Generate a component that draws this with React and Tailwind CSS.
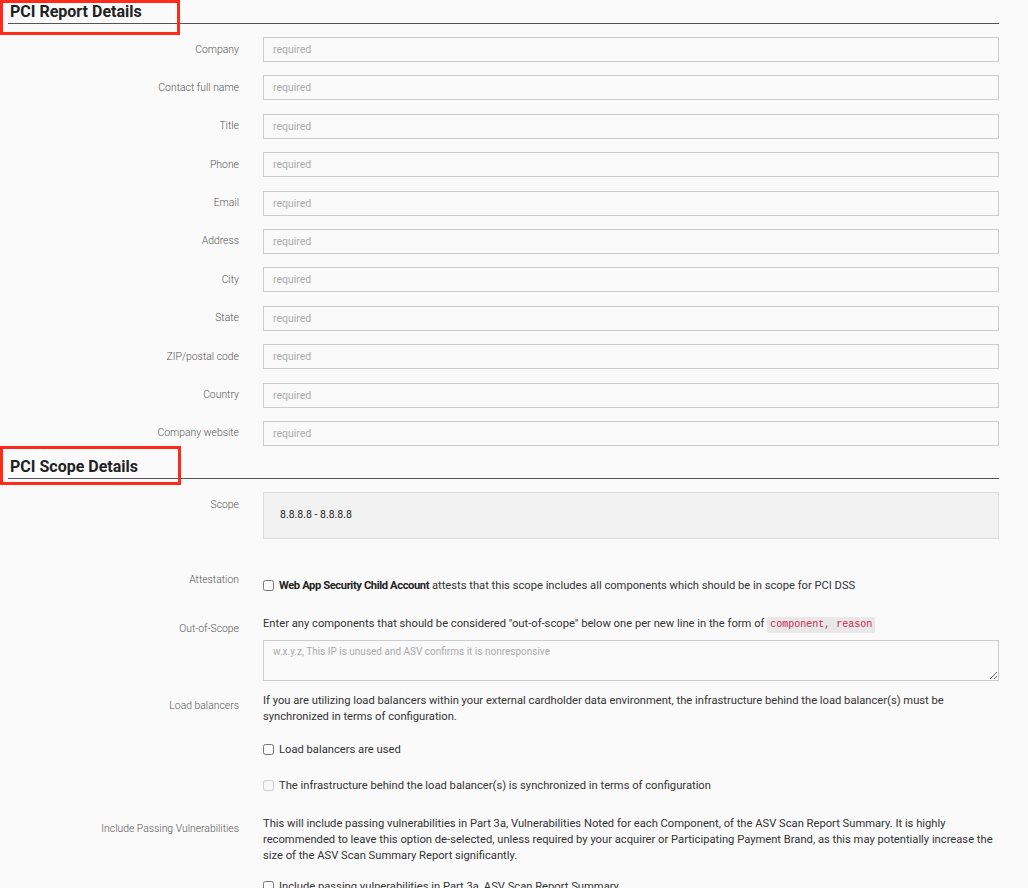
import React from 'react';

const reportFields = [
  'Company',
  'Contact full name',
  'Title',
  'Phone',
  'Email',
  'Address',
  'City',
  'State',
  'ZIP/postal code',
  'Country',
  'Company website',
];

const SectionTitle = ({ children, boxClass }) => (
  <div className="relative">
    <h2 className="pt-[2px] pb-[1px] pl-[2px] border-b border-[#555] text-[16px] leading-[20px] font-bold text-[#222]">
      {children}
    </h2>
    {/* red annotation box */}
    <div className={`absolute left-[-8px] border-[3px] border-[#ff2b1a] pointer-events-none ${boxClass}`}></div>
  </div>
);

const Label = ({ children, className = '' }) => (
  <div className={`w-[231px] shrink-0 text-right text-[10.4px] leading-[16px] font-light text-[#555] ${className}`}>
    {children}
  </div>
);

const Check = ({ disabled }) => (
  <input
    type="checkbox"
    disabled={disabled}
    className="m-0 w-[11px] h-[11px] shrink-0 accent-[#555]"
  />
);

const App = () => {
  return (
    <div className="min-h-screen bg-[#fafafa] pl-[8px] pr-[29px] pb-10 text-[#333]" style={{ fontFamily: 'Roboto, "Liberation Sans", sans-serif' }}>
      {/* PCI Report Details */}
      <SectionTitle boxClass="top-0 w-[180px] h-[35px]">PCI Report Details</SectionTitle>

      <div className="mt-[13px] flex flex-col gap-[13.4px]">
        {reportFields.map((f) => (
          <div key={f} className="flex items-center gap-[24px]">
            <Label>{f}</Label>
            <input
              placeholder="required"
              className="flex-1 h-[25px] border border-[#ccc] bg-[#fafafa] px-[9px] text-[10.5px] placeholder:text-[#aaa] outline-none"
            />
          </div>
        ))}
      </div>

      {/* PCI Scope Details */}
      <div className="mt-[9px]">
        <SectionTitle boxClass="top-[-9px] w-[181px] h-[39px]">PCI Scope Details</SectionTitle>
      </div>

      <div className="mt-[13px] flex gap-[24px]">
        <Label className="pt-[5px]">Scope</Label>
        <div className="flex-1 h-[47px] border border-[#ddd] bg-[#f2f2f2] pl-[16px] pt-[14px] text-[10.5px] leading-[16px] text-[#222]">
          8.8.8.8 - 8.8.8.8
        </div>
      </div>

      <div className="mt-[33px] flex gap-[24px]">
        <Label>Attestation</Label>
        <div className="flex-1 pt-[6px] flex items-center gap-[5px] text-[11.2px] leading-[16px]">
          <Check />
          <span>
            <b className="font-bold text-[#222] tracking-[-0.4px]">Web App Security Child Account</b> attests that this scope includes all components which should be in scope for PCI DSS
          </span>
        </div>
      </div>

      <div className="mt-[22px] flex gap-[24px]">
        <Label className="pt-[5px]">Out-of-Scope</Label>
        <div className="flex-1">
          <p className="text-[11.2px] leading-[16px]">
            Enter any components that should be considered "out-of-scope" below one per new line in the form of{' '}
            <code className="inline-block leading-[12px] bg-[#e8e8e8] text-[#c7254e] px-[3px] py-[2px] rounded-[2px] text-[10px]" style={{ fontFamily: '"Liberation Mono", monospace' }}>
              component, reason
            </code>
          </p>
          <textarea
            placeholder="w.x.y.z, This IP is unused and ASV confirms it is nonresponsive"
            className="mt-[7px] block w-full h-[41px] border border-[#ccc] bg-[#fafafa] px-[9px] py-[4px] text-[10px] leading-[14px] placeholder:text-[#aaa] outline-none"
          />
        </div>
      </div>

      <div className="mt-[12px] flex gap-[24px]">
        <Label className="pt-[5px]">Load balancers</Label>
        <div className="flex-1 text-[11.2px] leading-[16px]">
          <p>
            If you are utilizing load balancers within your external cardholder data environment, the infrastructure behind the load balancer(s) must be synchronized in terms of configuration.
          </p>
          <label className="mt-[17px] flex items-center gap-[5px]">
            <Check />
            <span>Load balancers are used</span>
          </label>
          <label className="mt-[20px] flex items-center gap-[5px]">
            <Check disabled />
            <span>The infrastructure behind the load balancer(s) is synchronized in terms of configuration</span>
          </label>
        </div>
      </div>

      <div className="mt-[22px] flex gap-[24px]">
        <Label className="pt-[5px]">Include Passing Vulnerabilities</Label>
        <div className="flex-1 text-[11.2px] leading-[16px]">
          <p>
            This will include passing vulnerabilities in Part 3a, Vulnerabilities Noted for each Component, of the ASV Scan Report Summary. It is highly recommended to leave this option de-selected, unless required by your acquirer or Participating Payment Brand, as this may potentially increase the size of the ASV Scan Summary Report significantly.
          </p>
          <label className="mt-[15px] flex items-center gap-[5px]">
            <Check />
            <span>Include passing vulnerabilities in Part 3a, ASV Scan Report Summary</span>
          </label>
        </div>
      </div>
    </div>
  );
};

export default App;
